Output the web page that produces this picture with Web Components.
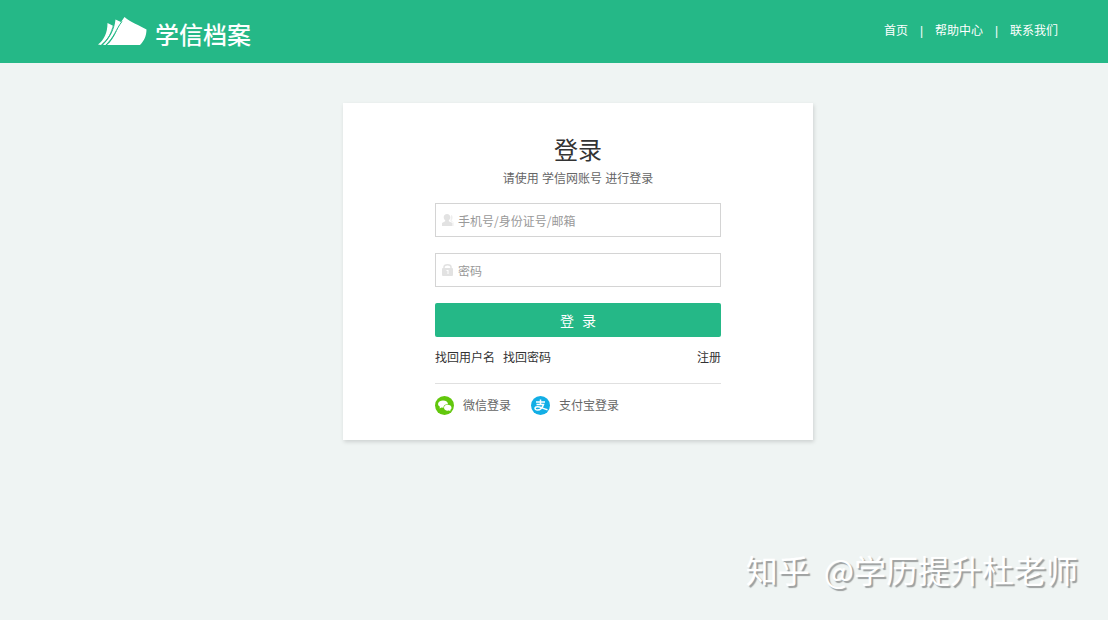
<!DOCTYPE html>
<html lang="zh-CN">
<head>
<meta charset="utf-8">
<meta name="viewport" content="width=device-width, initial-scale=1">
<title>登录 - 学信档案</title>
<style>
  body { margin: 0; background: #eff4f3; font: 12px/18px "Liberation Sans", "Noto Sans CJK SC", sans-serif; color: #666; }
</style>
</head>
<body>
<archive-page></archive-page>
<script>
const define = (name, html, setup) => {
  const template = document.createElement('template');
  template.innerHTML = html;
  customElements.define(name, class extends HTMLElement {
    constructor() {
      super();
      this.attachShadow({ mode: 'open' }).append(template.content.cloneNode(true));
    }
    connectedCallback() { if (setup) setup(this, this.shadowRoot); }
  });
};

define('archive-logo', `
<style>
  :host { display: block; }
  a { display: flex; align-items: flex-start; gap: 8px; color: #fff; text-decoration: none; font-size: 24px; line-height: 36px; font-weight: 500; font-family: "Noto Sans CJK SC", sans-serif; }
  svg { display: block; flex: none; }
</style>
<a href="#"><svg width="49" height="30" viewBox="0 0 49 30" fill="#fff" aria-hidden="true">
  <path d="M0 28.500C6 24 9.500 17 9.500 7L15.500 10C13.500 18 8 25 3 29Z"/>
  <path d="M5 29C12 22 16.500 14 17.500 3.500L24 6.500C19 13 15 22 7.500 29Z"/>
  <path d="M9 29C17 23 19.500 10 26.500 1C33 6.500 41 9 48.500 13.500C48.500 20 46 25 42 29Z"/>
  <path d="M3.500 29C11 23 13.500 16 15.500 9M8 29C16 22 18 13 24 5.500" fill="none" stroke="#25b887" stroke-width="1"/>
</svg><span>学信档案</span></a>`);

define('top-nav', `
<style>
  :host { display: block; }
  nav { display: flex; }
  a { color: #fff; text-decoration: none; }
  span { width: 27px; text-align: center; color: #fff; }
</style>
<nav><a href="#">首页</a><span>|</span><a href="#">帮助中心</a><span>|</span><a href="#">联系我们</a></nav>`);

define('site-header', `
<style>
  :host { display: block; background: #25b887; }
  header { display: flex; justify-content: space-between; align-items: flex-start; box-sizing: border-box; min-height: 63px; padding: 16px 50px 0 98px; }
  top-nav { padding-top: 6px; }
</style>
<header><archive-logo></archive-logo><top-nav></top-nav></header>`);

define('text-field', `
<style>
  :host { display: block; }
  label { display: flex; align-items: center; gap: 4px; box-sizing: border-box; height: 34px; padding: 0 6px; border: 1px solid #d4d4d4; background: #fff; }
  ::slotted(svg) { display: block; flex: none; }
  input { flex: 1; min-width: 0; box-sizing: border-box; height: 32px; padding: 0; border: 0; outline: 0; background: none; font: 12px "Noto Sans CJK SC", sans-serif; color: #333; }
  input::placeholder { color: #999; opacity: 1; }
</style>
<label><slot></slot><input></label>`, (host, root) => {
  const input = root.querySelector('input');
  input.type = host.getAttribute('type') || 'text';
  input.placeholder = host.getAttribute('placeholder');
  input.setAttribute('aria-label', input.placeholder);
});

define('social-link', `
<style>
  :host { display: block; }
  a { display: flex; align-items: center; gap: 8px; color: #666; text-decoration: none; }
  ::slotted(svg) { display: block; flex: none; }
</style>
<a href="#"><slot name="icon"></slot><span><slot></slot></span></a>`);

define('login-card', `
<style>
  :host { display: block; box-sizing: border-box; width: 100%; max-width: 470px; padding: 32px 92px 24px; background: #fff; box-shadow: 1px 2px 4px rgba(0, 0, 0, .14); }
  h1 { margin: 0; font-size: 24px; line-height: 32px; font-weight: 400; color: #333; text-align: center; }
  p { margin: 3px 0 15px; text-align: center; }
  text-field { margin-bottom: 16px; }
  button { display: block; width: 100%; height: 34px; padding: 2px 0 0; border: 0; border-radius: 2px; background: #25b887; color: #fff; font: inherit; font-size: 14px; white-space: pre; cursor: pointer; }
  .links { display: flex; gap: 8px; padding: 12px 0 16px; border-bottom: 1px solid #e0e0e0; }
  .links a { color: #333; text-decoration: none; }
  .links a:last-child { margin-left: auto; }
  .social { display: flex; gap: 20px; padding-top: 12px; }
</style>
<h1>登录</h1>
<p>请使用 学信网账号 进行登录</p>
<form>
  <text-field placeholder="手机号/身份证号/邮箱"><svg width="12" height="12" viewBox="0 0 12 12" fill="#e2e2e2" aria-hidden="true"><path d="M5 0C7 0 8.300 1.300 8.300 3.200C8.300 4.800 7.500 5.700 6.800 6.300V7.300L10.500 9V12H0V9L3.200 7.300V6.300C2.600 5.700 1.700 4.800 1.700 3.200C1.700 1.300 3 0 5 0Z"/><path d="M9 1C11 1.500 11 5 9.500 6.500L11.500 8.500V12H11V8.500L8.500 7Z" opacity=".6"/></svg></text-field>
  <text-field type="password" placeholder="密码"><svg width="12" height="12" viewBox="0 0 12 12" aria-hidden="true"><path d="M2 5V3C2 0 9 0 9 3V5" fill="none" stroke="#e2e2e2" stroke-width="1.500"/><rect x="0" y="4" width="11" height="8" rx="1" fill="#e2e2e2"/><path d="M4.500 6H6.500V10H5.500V7H4.500Z" fill="#fff"/></svg></text-field>
  <button type="button">登  录</button>
</form>
<div class="links"><a href="#">找回用户名</a><a href="#">找回密码</a><a href="#">注册</a></div>
<div class="social">
  <social-link><svg slot="icon" width="20" height="20" viewBox="0 0 20 20" aria-hidden="true"><circle cx="9.500" cy="9.500" r="9.500" fill="#62c70c"/><path d="M8 4.500C11 4.500 13 6 13 8.200C10 8 8.200 9.500 8.500 11.800L6.500 11.500L4.500 12.500L5 10.800C1.500 9 3 4.500 8 4.500Z" fill="#fff"/><path d="M12.300 8.800C15 8.800 16.500 10.100 16.500 11.700C16.500 12.700 16 13.500 15.200 14L15.500 15.200L14 14.500C11 15.100 9 13.700 9 11.700C9 10.100 10.500 8.800 12.300 8.800Z" fill="#fff"/></svg>微信登录</social-link>
  <social-link><svg slot="icon" width="20" height="20" viewBox="0 0 20 20" aria-hidden="true"><circle cx="9.500" cy="9.500" r="9.500" fill="#12aee5"/><path d="M5 6H14M9.500 3.500V8.500M5.500 8.500H12.500C11.500 11.500 9 14 6.500 14C3 14 3.500 10.700 6.500 10.700C9.500 10.700 12.500 13 16.500 13.800" fill="none" stroke="#fff" stroke-width="1.500"/></svg>支付宝登录</social-link>
</div>`);

define('photo-credit', `
<style>
  :host { display: flex; gap: 14px; position: absolute; right: 30px; bottom: 27px; font: 32px/48px "Noto Sans CJK SC", sans-serif; color: #fff; text-shadow: 2px 2px 1px rgba(0, 0, 0, .35); white-space: nowrap; }
</style>
<slot></slot>`);

define('archive-page', `
<style>
  :host { display: block; position: relative; min-height: 100vh; }
  main { display: flex; justify-content: center; padding: 40px 50px 40px 98px; }
</style>
<site-header></site-header>
<main><login-card></login-card></main>
<photo-credit><span>知乎</span> <span>@学历提升杜老师</span></photo-credit>`);
</script>
</body>
</html>
